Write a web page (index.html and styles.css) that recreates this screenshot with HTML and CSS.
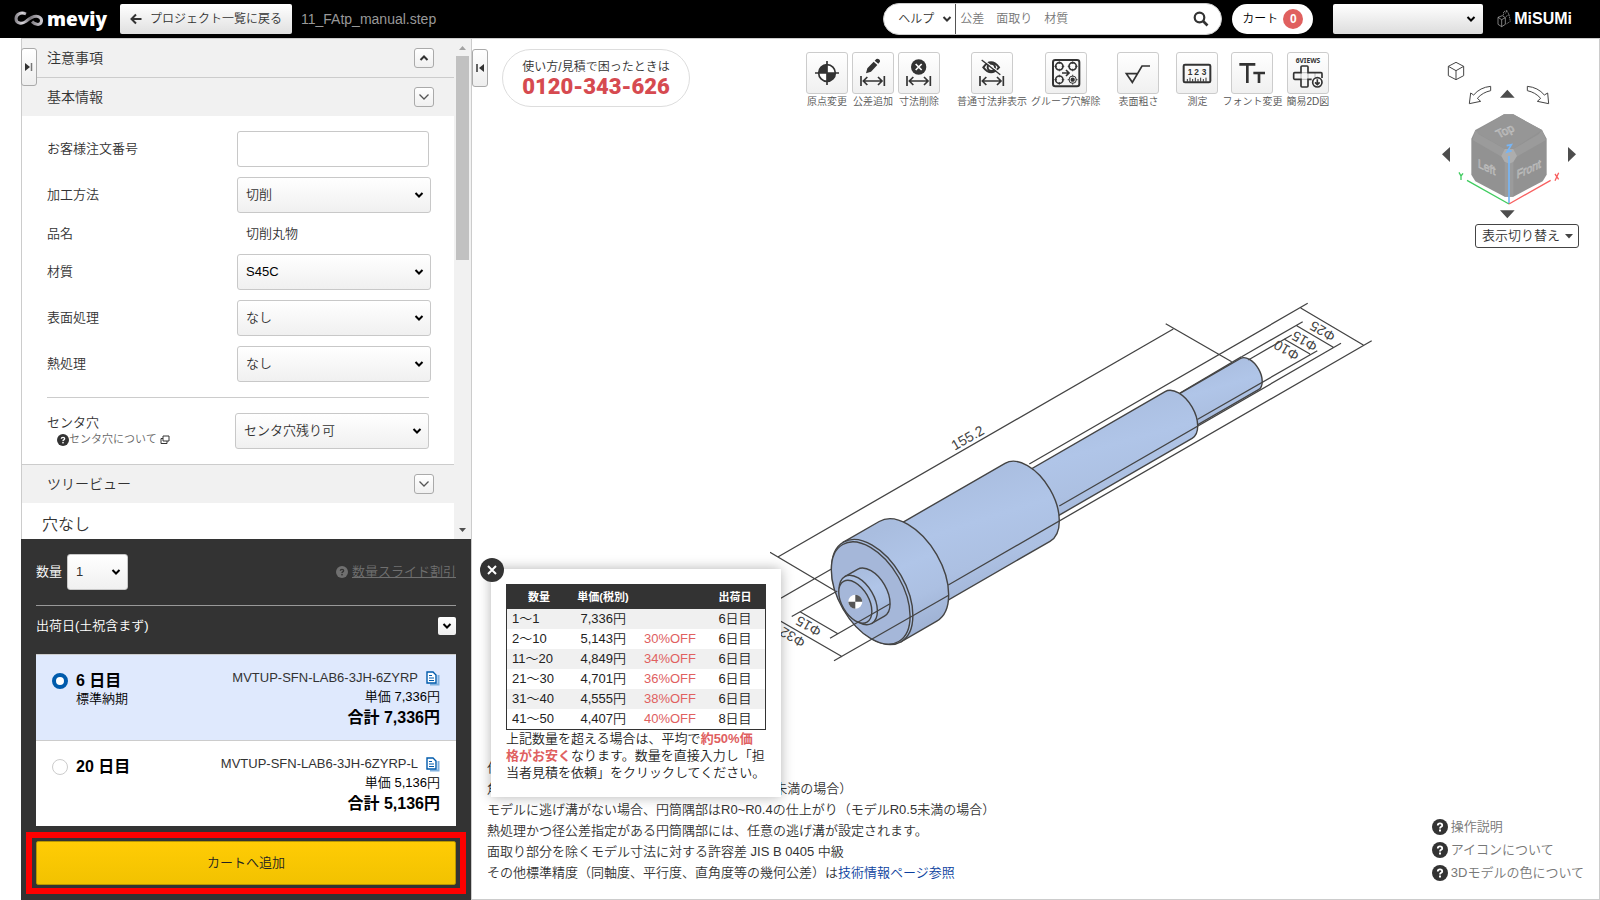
FILE: index.html
```html
<!DOCTYPE html>
<html lang="ja">
<head>
<meta charset="utf-8">
<title>meviy</title>
<link rel="stylesheet" href="styles.css">
</head>
<body>
<svg class="defs" width="0" height="0" aria-hidden="true">
  <symbol id="chev" viewBox="0 0 10 8"><path d="M1.500 2L5 5.500 8.500 2" fill="none" stroke="currentColor" stroke-width="2"/></symbol>
  <symbol id="help" viewBox="0 0 16 16"><circle cx="8" cy="8" r="8" fill="currentColor"/><path d="M5.800 6.400C5.800 3.800 10.200 3.800 10.200 6.400C10.200 7.900 8 7.800 8 9.400" fill="none" stroke="var(--mark,#fff)" stroke-width="1.800"/><rect x="7" y="10.500" width="2" height="2" fill="var(--mark,#fff)"/></symbol>
  <symbol id="dim" viewBox="0 0 120 120"><path d="M27 72v30M97 72v30M34 87H90M46 75L34 87l12 12M78 75l12 12-12 12" fill="none" stroke="currentColor" stroke-width="5"/></symbol>
  <symbol id="copy" viewBox="0 0 14 15"><path d="M4 13.500H12.500V4" fill="none" stroke="#7fb0de" stroke-width="2"/><path d="M1 1h6l3 3v8H1z" fill="#fff" stroke="#005bac" stroke-width="1.400"/><path d="M3 4.500h3M3 7h5M3 9.500h5" stroke="#005bac" stroke-width="1.200"/></symbol>
</svg>

<header class="header">
  <a class="logo" href="#">
    <svg width="30" height="16" viewBox="0 0 90 48"><defs><linearGradient id="lg" x1="0" x2="1"><stop offset="0" stop-color="#8d8a90"/><stop offset=".25" stop-color="#d9d6dc"/><stop offset=".55" stop-color="#77747a"/><stop offset="1" stop-color="#c9c6cc"/></linearGradient></defs><path d="M36 9C20 2 6 10 6 23C6 38 24 40 36 31C48 21 60 12 73 17C88 23 84 42 69 40C62 39 58 36 54 32" fill="none" stroke="url(#lg)" stroke-width="9"/></svg>
    <span class="logo-text">meviy</span>
  </a>
  <button class="back"><svg width="12" height="12" viewBox="0 0 12 12"><path d="M11.500 6H2M6 1.500L1.500 6 6 10.500" fill="none" stroke="#333" stroke-width="2"/></svg>プロジェクト一覧に戻る</button>
  <span class="file">11_FAtp_manual.step</span>
  <form class="search">
    <span class="pick search-pick"><select aria-label="検索対象"><option>ヘルプ</option></select><svg class="chev"><use href="#chev"/></svg></span>
    <input class="search-input" type="text" placeholder="公差　面取り　材質" aria-label="検索">
    <button class="search-btn" type="button" aria-label="検索する"><svg width="16" height="16" viewBox="0 0 16 16" fill="none" stroke="#333"><circle cx="6.500" cy="6.500" r="4.800" stroke-width="2.200"/><path d="M10 10l4.500 4.500" stroke-width="2.600"/></svg></button>
  </form>
  <a class="cart" href="#">カート<span class="badge">0</span></a>
  <span class="pick account"><select aria-label="アカウント"><option></option></select><svg class="chev"><use href="#chev"/></svg></span>
  <a class="misumi" href="#"><svg width="14" height="18" viewBox="0 0 42 54" fill="none" stroke="#bbb" stroke-width="2"><path d="M3 22L16 17 25 23V43L14 50 3 43zM3 22L14 29V50M14 29L25 23" /><path d="M19 16L20 5 30 2 36 14 26 20M30 2L24 12M36 14L40 34 28 42" stroke-dasharray="4 2"/></svg><span>MiSUMi</span></a>
</header>

<main class="main">
  <aside class="panel">
    <button class="tab tab-left" aria-label="パネルを開く"><svg width="8" height="10" viewBox="0 0 8 10"><path d="M0 1l5 4-5 4z" fill="#333"/><path d="M6.500 1v8" stroke="#777" stroke-width="1.500"/></svg></button>
    <div class="scroller">
      <div class="content">
        <h2 class="section"><span>注意事項</span><button class="toggle open" aria-label="閉じる"><svg class="chev up"><use href="#chev"/></svg></button></h2>
        <h2 class="section line"><span>基本情報</span><button class="toggle" aria-label="開く"><svg width="12" height="8" viewBox="0 0 12 8"><path d="M1.500 1.500L6 6l4.500-4.500" fill="none" stroke="#555" stroke-width="1.300"/></svg></button></h2>
        <div class="form">
          <div class="row"><label for="order">お客様注文番号</label><input id="order" class="field" type="text"></div>
          <div class="row wide"><label for="method">加工方法</label><span class="pick"><select id="method"><option>切削</option></select><svg class="chev"><use href="#chev"/></svg></span></div>
          <div class="row name"><span>品名</span><span class="value">切削丸物</span></div>
          <div class="row wide"><label for="mat">材質</label><span class="pick"><select id="mat" class="black"><option>S45C</option></select><svg class="chev"><use href="#chev"/></svg></span></div>
          <div class="row wide"><label for="surf">表面処理</label><span class="pick"><select id="surf"><option>なし</option></select><svg class="chev"><use href="#chev"/></svg></span></div>
          <div class="row wide"><label for="heat">熱処理</label><span class="pick"><select id="heat"><option>なし</option></select><svg class="chev"><use href="#chev"/></svg></span></div>
          <div class="row center">
            <div class="center-label"><label for="cent">センタ穴</label><a href="#"><svg width="12" height="12"><use href="#help"/></svg><span>センタ穴について</span><svg class="ext" width="10" height="10" viewBox="0 0 10 10" fill="none" stroke="#333"><path d="M3 1h6v5H3zM3 3.500H1v5h6V6"/></svg></a></div>
            <span class="pick"><select id="cent"><option>センタ穴残り可</option></select><svg class="chev"><use href="#chev"/></svg></span>
          </div>
        </div>
        <h2 class="section line"><span>ツリービュー</span><button class="toggle" aria-label="開く"><svg width="12" height="8" viewBox="0 0 12 8"><path d="M1.500 1.500L6 6l4.500-4.500" fill="none" stroke="#555" stroke-width="1.300"/></svg></button></h2>
        <div class="tree">穴なし</div>
      </div>
      <div class="bar" aria-hidden="true">
        <svg width="17" height="17" viewBox="0 0 17 17"><path d="M5 11l3.500-4 3.500 4z" fill="#a3a3a3"/></svg>
        <div class="thumb"></div>
        <svg width="17" height="17" viewBox="0 0 17 17"><path d="M5 6l3.500 4L12 6z" fill="#505050"/></svg>
      </div>
    </div>
    <section class="order">
      <div class="qty">
        <label for="qty">数量</label>
        <span class="pick qty-pick"><select id="qty"><option>1</option></select><svg class="chev"><use href="#chev"/></svg></span>
        <a class="slide" href="#"><svg width="12" height="12"><use href="#help"/></svg><span>数量スライド割引</span></a>
      </div>
      <div class="ship"><span>出荷日(土祝含まず)</span><button class="mini" aria-label="開く"><svg class="chev"><use href="#chev"/></svg></button></div>
      <div class="plans">
        <div class="plan on">
          <input type="radio" name="plan" id="p1" checked>
          <label for="p1"><b>6 日目</b><small>標準納期</small></label>
          <div class="price"><span class="code">MVTUP-SFN-LAB6-3JH-6ZYRP<svg width="14" height="15"><use href="#copy"/></svg></span><span class="unit">単価 7,336円</span><b>合計 7,336円</b></div>
        </div>
        <div class="plan">
          <input type="radio" name="plan" id="p2">
          <label for="p2"><b>20 日目</b></label>
          <div class="price"><span class="code">MVTUP-SFN-LAB6-3JH-6ZYRP-L<svg width="14" height="15"><use href="#copy"/></svg></span><span class="unit">単価 5,136円</span><b>合計 5,136円</b></div>
        </div>
      </div>
      <div class="focus"><button class="add">カートへ追加</button></div>
    </section>
  </aside>

  <section class="viewer">
    <svg class="model" width="610" height="380" viewBox="770 290 610 380">
      <defs>
        <linearGradient id="cyl" gradientUnits="objectBoundingBox" x1=".3" y1=".1" x2=".62" y2=".95"><stop offset="0" stop-color="#a9bddf"/><stop offset=".4" stop-color="#b0c5e8"/><stop offset=".7" stop-color="#acc0e2"/><stop offset="1" stop-color="#9fb2d4"/></linearGradient>
      </defs>
      <g stroke="#444" stroke-width="1.400" fill="url(#cyl)">
        <path d="M1241.700 356.700L1180 393" fill="none"/>
        <path d="M1169.600 399.400L1240.500 358.500A18 10.400 60 0 1 1258.500 389.700L1187.600 430.600Z"/>
        <path d="M1014 478.900L1165.100 391.600A27 15.600 60 0 1 1192.100 438.400L1041 525.700Z"/>
        <path d="M885.500 532.300L1005 463.300A45 26 60 0 1 1050 541.300L930.500 610.300Z"/>
        <path d="M843.400 542.200L879.200 521.500A57.500 33.200 60 0 1 936.800 621.100L901 641.800Z"/>
        <ellipse rx="57.500" ry="33.200" transform="translate(872.200 592) rotate(60)"/>
        <ellipse rx="56" ry="32" transform="translate(870.700 593) rotate(60)" fill="#a5b7d9"/>
        <path d="M844.800 576.600L857.500 569.300A27 15.600 60 0 1 884.500 616.100L871.800 623.400Z"/>
        <ellipse rx="27" ry="15.600" transform="translate(858.300 600) rotate(60)"/>
        <ellipse rx="23.500" ry="13.500" transform="translate(855.300 601.700) rotate(60)" fill="#a5b7d9"/>
      </g>
      <path fill="none" stroke="#444" stroke-width="1.300" d="M778.300 556.700L1173.300 329M770 552.300L835 590.700M1165.700 323.700L1231.700 361.700M831 569.300L770 604.500M948.700 595.300L834 660.700M1307.700 303.300L1029.300 464M1371.700 340.700L948.300 585M1302.700 321.700L1241.700 356.700M1341 343.300L1059.300 506M1291.700 335L1248.300 360M1317.300 350.700L1197.300 419.500M1300.700 308L1363.300 345M1296.700 325.700L1333.300 347.300M1284 339L1310 354M837.300 591L791.700 616.500M890 603.700L830 638.300M800 611.700L838.300 634M770 615L842.300 656.700"/>
      <circle cx="855.300" cy="601.700" r="7" fill="#fff"/>
      <path d="M855.300 601.700v-7a7 7 0 0 1 7 7zM855.300 601.700v7a7 7 0 0 1-7-7z" fill="#555"/>
      <g class="dims">
        <text transform="translate(970 442) rotate(-30)">155.2</text>
        <text transform="translate(811 622) rotate(210)">Φ15</text>
        <text transform="translate(795 633) rotate(210)">Φ32</text>
        <text transform="translate(1325 327) rotate(210)">Φ25</text>
        <text transform="translate(1307 337) rotate(210)">Φ15</text>
        <text transform="translate(1289 346) rotate(210)">Φ10</text>
      </g>
    </svg>

    <div class="top">
      <button class="tab tab-right" aria-label="パネルを閉じる"><svg width="8" height="10" viewBox="0 0 8 10"><path d="M8 1L3 5l5 4z" fill="#333"/><path d="M1 1v8" stroke="#333" stroke-width="1.500"/></svg></button>
      <div class="phone"><span>使い方/見積で困ったときは</span><strong>0120-343-626</strong></div>
      <div class="tools">
        <button class="tool"><i><svg viewBox="3 3 120 120"><circle cx="63" cy="63" r="25" fill="#fff" stroke="#333" stroke-width="5"/><path d="M63 63V38A25 25 0 0 0 38 63zM63 63V88A25 25 0 0 0 88 63z" fill="#333"/><path d="M63 27V99M27 63H99" stroke="#333" stroke-width="5"/></svg></i>原点変更</button>
        <button class="tool"><i><svg viewBox="3 3 120 120"><path d="M42 64l4-15 19-20 11 10-19 20zM68 26l5-5q4-2 8 1t3 7l-5 6z" fill="#333"/><use href="#dim" width="120" height="120"/></svg></i>公差追加</button>
        <button class="tool"><i><svg viewBox="3 3 120 120"><circle cx="62" cy="45" r="23" fill="#333"/><path d="M53 36l18 18M71 36L53 54" stroke="#fff" stroke-width="5"/><use href="#dim" width="120" height="120"/></svg></i>寸法削除</button>
        <button class="tool gap"><i><svg viewBox="3 3 120 120"><path d="M37 46Q60 16 84 46Q60 76 37 46z" fill="none" stroke="#333" stroke-width="6"/><circle cx="61" cy="46" r="11" fill="none" stroke="#333" stroke-width="6"/><path d="M35 22L91 66" stroke="#fafafa" stroke-width="4"/><path d="M32 24L88 68" stroke="#333" stroke-width="4"/><use href="#dim" width="120" height="120"/></svg></i>普通寸法非表示</button>
        <button class="tool"><i><svg viewBox="3 3 120 120" fill="none" stroke="#333"><rect x="24" y="24" width="79" height="79" rx="7" stroke-width="6"/><g stroke-width="5"><circle cx="43" cy="43" r="11"/><circle cx="83" cy="43" r="11"/><circle cx="43" cy="83" r="11"/><circle cx="83" cy="83" r="11" stroke-width="3"/><circle cx="83" cy="83" r="4" fill="#333"/></g><path d="M43 28v8m0 14v8M28 43h8m14 0h8M83 28v8m0 14v8M68 43h8m14 0h8M43 68v8m0 14v8M28 83h8m14 0h8M83 68v6m0 18v6M68 83h6m18 0h6" stroke-width="2.500"/><path d="M51 63H71M63 54l9 9-9 9" stroke-width="5"/></svg></i>グループ穴解除</button>
        <button class="tool gap"><i><svg viewBox="3 3 120 120"><path d="M60 65H28L46 91L75 42H99" fill="none" stroke="#333" stroke-width="5"/></svg></i>表面粗さ</button>
        <button class="tool gap"><i><svg viewBox="3 3 120 120"><rect x="23" y="38" width="80" height="53" rx="4" fill="none" stroke="#333" stroke-width="6"/><path d="M34 89V81M42 89V77M50 89V81M58 89V77M66 89V81M74 89V77M82 89V81M90 89V77" stroke="#333" stroke-width="3"/><text x="35" y="69">1</text><text x="55" y="69">2</text><text x="77" y="69">3</text></svg></i>測定</button>
        <button class="tool"><i><svg viewBox="3 3 120 120"><path d="M25 37H73M49 37V93M67 63H102M84 63V93" stroke="#333" stroke-width="8"/></svg></i>フォント変更</button>
        <button class="tool"><i><svg viewBox="3 3 120 120"><text class="six" x="63" y="33">6VIEWS</text><path d="M42 62V82M63 62V82M42 62H63M42 82H63M84 62V76" fill="none" stroke="#999" stroke-width="2"/><path d="M74 82H63V102Q63 105 60 105H45Q42 105 42 102V82H23Q20 82 20 79V65Q20 62 23 62H42V45Q42 42 45 42H60Q63 42 63 45V62H102Q105 62 105 65V78" fill="none" stroke="#333" stroke-width="5"/><circle cx="91" cy="91" r="14" fill="#fff" stroke="#333" stroke-width="5"/><path d="M91 82V98M84 91l7 7 7-7" fill="none" stroke="#333" stroke-width="5"/></svg></i>簡易2D図</button>
      </div>
      <div class="nav">
        <svg width="140" height="160" viewBox="420 180 420 480">
          <g fill="none" stroke="#444" stroke-width="3" stroke-linejoin="round"><path d="M468 187L491 199V227L468 239L445 227V199zM445 199L468 212L491 199M468 212V239"/><path d="M572 259Q540 262 521 285L512 279L508 311L542 304L532 295Q548 277 572 272z"/><path d="M682 259Q714 262 733 285L743 279L746 311L712 304L722 295Q706 277 682 272z"/></g>
          <path d="M622 269L644 293H600zM622 655L600 631H644zM426 463L450 441V486zM828 463L804 441V486z" fill="#4d4d4d"/>
          <path d="M612 343H640L726 390L740 416V524L728 544L640 590H614L526 544L514 524V416L526 390z" fill="#929292"/>
          <path d="M612 343H640L726 390L640 446H614L526 396z" fill="#969696"/>
          <path d="M526 390L536 403L614 447L605 470L518 420zM726 390L716 403L640 447L650 470L738 420zM614 488L628 490L640 486V590H614z" fill="#9b9b9b"/>
          <path d="M614 447H640L651 468L640 486L628 491L614 486L604 468z" fill="#adadad"/>
          <g class="faces"><text transform="matrix(.866 -.4 .5 .85 596 415)">Top</text><text transform="matrix(.866 .4 0 1 534 502)">Left</text><text transform="matrix(.866 -.4 0 1 650 536)">Front</text></g>
          <path d="M627 612V468M620 437L634 434L621 456L635 452" fill="none" stroke="#77b5f5" stroke-width="5"/>
          <path d="M627 612L501 541M477 517L483 528L489 520M483 528V540" fill="none" stroke="#40cc60" stroke-width="4"/>
          <path d="M627 612L752 541M765 522L776 538M776 518L765 542" fill="none" stroke="#f86060" stroke-width="4"/>
        </svg>
        <button class="switch">表示切り替え<svg width="8" height="5" viewBox="0 0 8 5"><path d="M0 0H8L4 4.500z" fill="#444"/></svg></button>
      </div>
    </div>

    <div class="bottom">
      <div class="notes">
        <p>仕上げ</p>
        <p>角形状の隅部はR0~R0.4の仕上がり（モデルR0.5未満の場合）</p>
        <p>モデルに逃げ溝がない場合、円筒隅部はR0~R0.4の仕上がり（モデルR0.5未満の場合）</p>
        <p>熱処理かつ径公差指定がある円筒隅部には、任意の逃げ溝が設定されます。</p>
        <p>面取り部分を除くモデル寸法に対する許容差 JIS B 0405 中級</p>
        <p>その他標準精度（同軸度、平行度、直角度等の幾何公差）は<a href="#">技術情報ページ参照</a></p>
      </div>
      <nav class="links">
        <a href="#"><svg width="16" height="16"><use href="#help"/></svg>操作説明</a>
        <a href="#"><svg width="16" height="16"><use href="#help"/></svg>アイコンについて</a>
        <a href="#"><svg width="16" height="16"><use href="#help"/></svg>3Dモデルの色について</a>
      </nav>
    </div>

    <div class="popup">
      <button class="close" aria-label="閉じる"><svg width="10" height="10" viewBox="0 0 10 10"><path d="M1 1l8 8M9 1L1 9" stroke="#fff" stroke-width="2"/></svg></button>
      <table>
        <thead><tr><th>数量</th><th>単価(税別)</th><th></th><th>出荷日</th></tr></thead>
        <tbody>
          <tr><td>1〜1</td><td>7,336円</td><td></td><td>6日目</td></tr>
          <tr><td>2〜10</td><td>5,143円</td><td>30%OFF</td><td>6日目</td></tr>
          <tr><td>11〜20</td><td>4,849円</td><td>34%OFF</td><td>6日目</td></tr>
          <tr><td>21〜30</td><td>4,701円</td><td>36%OFF</td><td>6日目</td></tr>
          <tr><td>31〜40</td><td>4,555円</td><td>38%OFF</td><td>6日目</td></tr>
          <tr><td>41〜50</td><td>4,407円</td><td>40%OFF</td><td>8日目</td></tr>
        </tbody>
      </table>
      <p>上記数量を超える場合は、平均で<b>約50%価<br>格がお安く</b>なります。数量を直接入力し「担当者見積を依頼」をクリックしてください。</p>
    </div>
  </section>
</main>
</body>
</html>
```
FILE: styles.css
```css
* { box-sizing: border-box; }
body {
  margin: 0;
  height: 100vh;
  display: flex;
  flex-direction: column;
  overflow: hidden;
  background: #fff;
  color: #333;
  font: 13px/20px "Liberation Sans", "Noto Sans CJK JP DemiLight", "Noto Sans CJK JP", sans-serif;
}
button, select, input { font: inherit; color: inherit; margin: 0; }
button { padding: 0; cursor: pointer; }
a { color: inherit; text-decoration: none; }
p, h2 { margin: 0; font-weight: inherit; }
b, th { font-family: "Liberation Sans", "Noto Sans CJK JP", sans-serif; font-weight: 700; }
.defs { position: absolute; }
.chev { width: 10px; height: 8px; }
.up { transform: rotate(180deg); }

/* Select with its own chevron */
.pick { position: relative; display: block; }
.pick select {
  appearance: none;
  display: block;
  width: 100%;
  height: 36px;
  padding: 0 8px;
  border: 1px solid #c8c8c8;
  border-radius: 3px;
  background: linear-gradient(#fff, #f0f0f0);
}
.pick select.black { color: #000; }
.pick .chev { position: absolute; right: 7px; top: 50%; margin-top: -4px; color: #000; pointer-events: none; }

/* Header */
.header {
  flex: none;
  height: 38px;
  padding: 0 28px 0 14px;
  display: flex;
  align-items: center;
  background: #000;
  color: #fff;
}
.logo { display: flex; align-items: center; gap: 3px; width: 106px; }
.logo-text { font: 800 19px/24px "Open Sans", sans-serif; }
.back {
  display: flex;
  align-items: center;
  justify-content: center;
  gap: 8px;
  width: 172px;
  height: 30px;
  border: 0;
  border-radius: 2px;
  background: linear-gradient(#fff, #e0e0e0);
  color: #333;
  font-size: 12px;
}
.file { margin-left: 9px; color: #999; font-size: 14px; }
.search {
  display: flex;
  align-items: center;
  width: 339px;
  height: 32px;
  margin-left: auto;
  border: 1px solid #ccc;
  border-radius: 16px;
  background: #fff;
  color: #333;
  font-size: 12px;
}
.search-pick { width: 72px; border-right: 1px solid #555; }
.search-pick select { height: 30px; padding-left: 14px; border: 0; background: none; }
.search-pick .chev { right: 3px; color: #333; }
.search-input { flex: 1; min-width: 0; height: 30px; padding: 0 4px; border: 0; background: none; }
.search-input::placeholder { color: #777; opacity: 1; }
.search-btn { width: 40px; height: 24px; border: 0; background: none; }
.search-btn svg { display: block; margin: 0 auto; }
.cart {
  display: flex;
  align-items: center;
  justify-content: space-between;
  width: 81px;
  height: 30px;
  margin-left: 10px;
  padding: 0 10px;
  border-radius: 15px;
  background: #fff;
  color: #000;
  font-size: 12px;
}
.badge { width: 20px; border-radius: 10px; background: #e0605f; color: #fff; font-weight: bold; text-align: center; }
.account { width: 150px; margin: 0 14px 0 20px; }
.account select { height: 30px; border: 0; border-radius: 2px; background: linear-gradient(#fff, #ddd); }
.misumi { display: flex; align-items: center; gap: 3px; font: bold 16px/20px "Liberation Sans", sans-serif; }

.main { flex: 1; min-height: 0; display: flex; padding-left: 21px; }

/* Left panel */
.panel { position: relative; flex: none; width: 451px; display: flex; flex-direction: column; border: 1px solid #ccc; border-bottom: 0; }
.scroller { flex: 1; min-height: 0; display: flex; }
.content { flex: 1; overflow: hidden; }
.bar { flex: none; width: 17px; display: flex; flex-direction: column; align-items: center; background: #f1f1f1; }
.bar svg { flex: none; }
.thumb { width: 13px; height: 204px; margin-bottom: auto; background: #c1c1c1; }
.tab {
  position: absolute;
  z-index: 2;
  display: flex;
  align-items: center;
  justify-content: center;
  width: 16px;
  height: 38px;
  border: 1px solid #aaa;
  border-radius: 3px;
  background: linear-gradient(#fff, #eee);
}
.tab-left { left: -1px; top: 9px; }
.tab-right { left: 0; top: 10px; }
.section {
  display: flex;
  align-items: center;
  justify-content: space-between;
  height: 38px;
  padding: 0 20px 0 25px;
  background: #f1f1f1;
  font-size: 14px;
  line-height: 20px;
}
.section.line { height: 39px; border-top: 1px solid #ccc; }
.toggle { display: flex; align-items: center; justify-content: center; width: 20px; height: 20px; border: 1px solid #aaa; border-radius: 3px; background: linear-gradient(#fff, #f0f0f0); }
.form { display: flex; flex-direction: column; gap: 10px; padding: 15px 25px; }
.row { display: grid; grid-template-columns: 190px 1fr; align-items: center; }
.row.wide { margin-right: -2px; }
.row.name { height: 21px; }
.value { padding-left: 9px; }
.field { width: 100%; height: 36px; border: 1px solid #c8c8c8; border-radius: 3px; background: #fff; }
.row.center { grid-template-columns: 188px 1fr; margin-top: 5px; padding-top: 15px; border-top: 1px solid #ccc; }
.center-label { line-height: 17px; }
.center-label a { display: flex; align-items: center; margin-left: 10px; color: #666; font-size: 11px; line-height: 17px; }
.center-label a svg { color: #333; }
.center-label .ext { margin-left: 3px; }
.tree { padding: 10px 20px; font-size: 16px; line-height: 24px; }

.order { flex: none; margin: 0 0 0 -1px; padding: 15px 5px 6px; background: #333; color: #fff; }
.qty { display: flex; align-items: center; gap: 5px; margin: 0 10px; padding-bottom: 15px; border-bottom: 1px solid #999; }
.qty-pick { width: 61px; color: #333; }
.slide { display: flex; align-items: center; gap: 4px; margin-left: auto; color: #707070; --mark: #333; text-decoration: underline; }
.ship { display: flex; align-items: center; justify-content: space-between; margin: 10px 10px 18px; }
.mini { display: flex; align-items: center; justify-content: center; width: 18px; height: 18px; border: 0; border-radius: 2px; background: linear-gradient(#fff, #eee); color: #000; }
.plans { margin: 0 10px; color: #000; }
.plan { display: flex; align-items: flex-start; height: 86px; padding: 14px 16px 0; border-top: 1px solid #ccc; background: #fff; }
.plan.on { background: #dfe9fd; }
.plan input { appearance: none; flex: none; width: 16px; height: 16px; margin: 4px 8px 0 0; border: 1px solid #ccc; border-radius: 50%; background: #fff; }
.plan input:checked { border: 4px solid #005bac; }
.plan label { display: flex; flex-direction: column; padding-top: 2px; }
.plan b { font-size: 16px; line-height: 20px; }
.plan small { font-size: 13px; line-height: 16px; }
.price { display: flex; flex-direction: column; align-items: flex-end; margin-left: auto; }
.price .code { display: flex; align-items: center; gap: 8px; line-height: 18px; color: #333; }
.price .unit { line-height: 20px; }
.price b { line-height: 22px; }
.focus { margin-top: 6px; padding: 3px 4px; border: 6px solid #f00; }
.add { display: block; width: 100%; height: 44px; border: 1px solid #b89600; border-radius: 2px; background: linear-gradient(#ffcc05, #f2c200); color: #222; }

/* Viewer */
.viewer { position: relative; flex: 1; min-width: 0; display: flex; flex-direction: column; justify-content: space-between; border: 1px solid #ccc; border-left: 0; }
.model { position: absolute; left: 298px; top: 251px; }
.dims { font-size: 14px; fill: #444; text-anchor: middle; }
.top { position: relative; display: flex; align-items: flex-start; padding: 10px 20px 0 30px; }
.phone { display: flex; flex-direction: column; align-items: center; width: 188px; height: 58px; padding-top: 8px; border: 1px solid #ddd; border-radius: 29px; line-height: 18px; white-space: nowrap; }
.phone span { font-size: 12px; }
.phone strong { color: #d64a50; font: 900 22px/22px Roboto, "Liberation Sans", sans-serif; }
.tools { display: flex; gap: 4px; margin: 3px 0 0 116px; }
.tool { display: flex; flex-direction: column; align-items: center; min-width: 42px; border: 0; background: none; color: #555; font-size: 10px; line-height: 16px; white-space: nowrap; }
.tool.gap { margin-left: 13px; }
.tool i { display: block; width: 42px; height: 42px; border: 1px solid #ccc; border-radius: 3px; background: linear-gradient(#fff, #f0f0f0); color: #333; font-style: normal; }
.tool svg { display: block; width: 40px; height: 40px; }
.tool text { font: bold 25px "Liberation Sans", sans-serif; fill: #333; }
.tool text.six { font: bold 20px "Noto Sans", sans-serif; text-anchor: middle; }
.nav { display: flex; flex-direction: column; align-items: flex-end; gap: 4px; margin: 11px 0 0 auto; }
.nav > svg { display: block; margin-right: -1px; }
.faces { font: 36px "Liberation Sans", sans-serif; fill: #999; stroke: #c0c0c0; stroke-width: 2px; }
.switch { display: flex; align-items: center; justify-content: space-between; width: 104px; height: 24px; padding: 0 5px 0 6px; border: 1px solid #444; border-radius: 3px; background: #fff; }
.bottom { position: relative; display: flex; align-items: flex-end; justify-content: space-between; padding: 0 15px 16px; }
.notes p { line-height: 21px; }
.notes a { color: #0b3f9e; }
.links { display: flex; flex-direction: column; gap: 3px; color: #777; }
.links a { display: flex; align-items: center; gap: 3px; }
.links svg { color: #333; }

/* Volume discount popup */
.popup { position: absolute; left: 19px; top: 530px; width: 290px; padding: 15px 15px 16px; background: #fff; color: #222; box-shadow: 0 0 12px rgba(0, 0, 0, .3); }
.close { position: absolute; left: -11px; top: -11px; width: 24px; height: 24px; border: 0; border-radius: 50%; background: #333; }
.close svg { display: block; margin: 7px; }
.popup table { width: 100%; border: 1px solid #333; border-spacing: 0; table-layout: fixed; }
.popup th { height: 24px; padding: 0; background: #333; color: #fff; font-size: 11px; line-height: 16px; }
.popup th:nth-child(1) { width: 64px; }
.popup th:nth-child(2) { width: 64px; }
.popup th:nth-child(3) { width: 70px; }
.popup td { height: 20px; padding: 0 5px; line-height: 18px; white-space: nowrap; }
.popup td:nth-child(2) { text-align: right; padding-right: 9px; }
.popup td:nth-child(3) { text-align: center; color: #e0605f; }
.popup td:nth-child(4) { text-align: center; }
.popup tbody tr:nth-child(odd) { background: #f0f0f0; }
.popup p { line-height: 17px; }
.popup p b { color: #e0605f; }
```
